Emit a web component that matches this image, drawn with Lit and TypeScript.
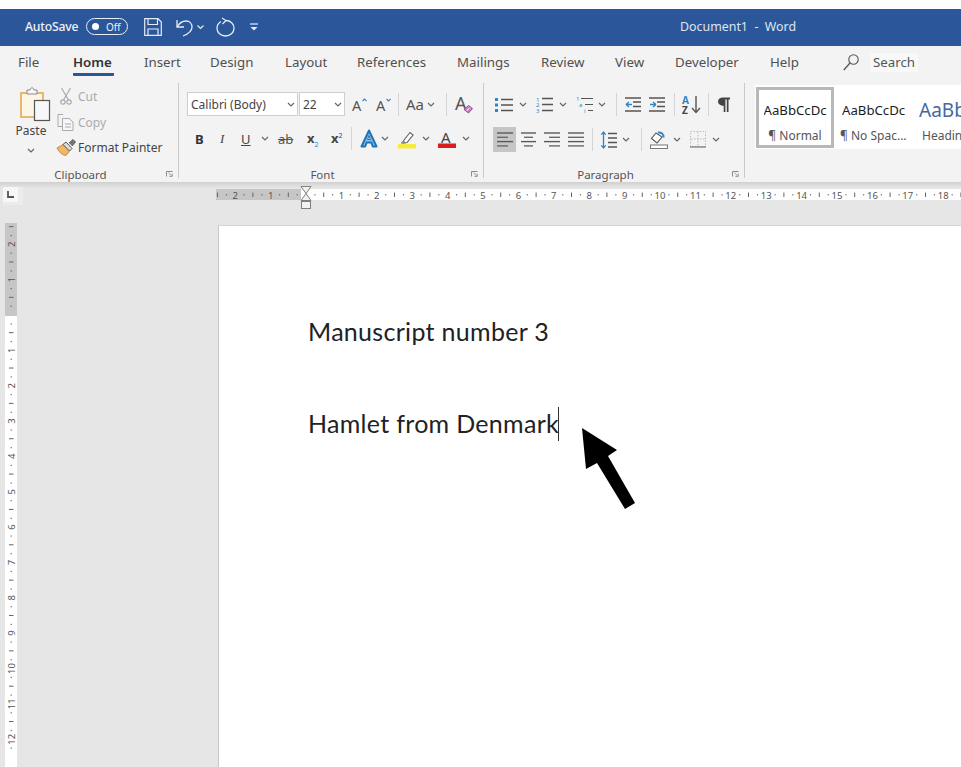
import { LitElement, html, css, svg, TemplateResult } from "lit";
import { customElement } from "lit/decorators.js";

const chev = () => html`<svg class="chev" width="8" height="5" viewBox="0 0 8 5"><path d="M1 1 L4 4 L7 1" fill="none" stroke="#666" stroke-width="1.2"/></svg>`;
const sep = () => html`<span class="vsep"></span>`;
const ic = (w: number, h: number, body: unknown) => html`<svg width=${w} height=${h} viewBox="0 0 ${w} ${h}" fill="none">${body}</svg>`;

const bullets = ic(18, 16, svg`<g fill="#2e86c9"><rect x="0" y="1" width="3" height="3"/><rect x="0" y="6.5" width="3" height="3"/><rect x="0" y="12" width="3" height="3"/></g><path d="M6 2.5H18M6 8H18M6 13.5H18" stroke="#555" stroke-width="1.3"/>`);
const numbering = ic(17, 17, svg`<g font-family="Noto Sans" font-size="6" fill="#2e86c9"><text x="0" y="5.5">1</text><text x="0" y="11">2</text><text x="0" y="16.5">3</text></g><path d="M6 2.5H17M6 8.5H17M6 14.5H17" stroke="#555" stroke-width="1.3"/>`);
const multilevel = ic(17, 17, svg`<g font-family="Noto Sans" font-size="6" fill="#2e86c9"><text x="0" y="5">1</text><text x="3" y="11">a</text><text x="8" y="16.5">i</text></g><path d="M5 2.5H17M9 8.5H17M12 14.5H17" stroke="#555" stroke-width="1.2"/>`);
const outdent = ic(16, 15, svg`<path d="M0 1H16M8 5H16M8 9.5H16M0 14H16" stroke="#555" stroke-width="1.3"/><path d="M1 7.5H7M1 7.5L4 5M1 7.5L4 10" stroke="#2e86c9" stroke-width="1.3"/>`);
const indent = ic(16, 15, svg`<path d="M0 1H16M8 5H16M8 9.5H16M0 14H16" stroke="#555" stroke-width="1.3"/><path d="M1 7.5H7M7 7.5L4 5M7 7.5L4 10" stroke="#2e86c9" stroke-width="1.3"/>`);
const sort = ic(19, 19, svg`<text x="0" y="8.5" font-family="Noto Sans" font-size="10" font-weight="700" fill="#2e86c9">A</text><text x="0" y="18.5" font-family="Noto Sans" font-size="10" font-weight="700" fill="#444">Z</text><path d="M14 1V17M10 13L14 17.5L18 13" stroke="#555" stroke-width="1.4"/>`);
const pilcrow = ic(12, 15, svg`<path d="M5 .5H12V2.5H10.5V15H8.8V2.5H7.4V15H5.7V8.8C2.5 8.8 0 7.2 0 4.6C0 2 2.2 .5 5 .5Z" fill="#444"/>`);
const align = (rows: [number, number][]) => ic(16, 15, svg`${rows.map(([a, b], i) => svg`<path d="M${a} ${1 + i * 4.3}H${b}" stroke=${i % 2 ? "#6a6a6a" : "#5a5a5a"} stroke-width="1.4"/>`)}`);
const spacing = ic(16, 18, svg`<path d="M2.5 1V17M.3 3.6L2.5 1L4.7 3.6M.3 14.4L2.5 17L4.7 14.4" stroke="#2e86c9" stroke-width="1.3"/><path d="M7 2.5H16M7 7H16M7 11.5H16M7 16H16" stroke="#555" stroke-width="1.3"/>`);
const shading = ic(18, 18, svg`<path d="M6 2L1.5 7.5L7 12L12 6Z" fill="#fff" stroke="#555" stroke-width="1.1"/><path d="M8 1.5C11 1 14 3 13.5 6.5" stroke="#2e86c9" stroke-width="2"/><rect x=".5" y="14" width="17" height="3.5" fill="#fff" stroke="#777"/>`);
const borders = ic(16, 17, svg`<rect x=".5" y=".5" width="15" height="15" stroke="#bbb" stroke-dasharray="1.5 1.5"/><path d="M8 1V15M1 8H15" stroke="#bbb" stroke-dasharray="1.5 1.5"/><path d="M0 16H16" stroke="#777" stroke-width="1.2"/>`);
const growA = (up: boolean) => ic(15, 15, svg`<text x="0" y="13.5" font-family="Noto Sans" font-size="14.5" fill="#555">A</text><path d=${up ? "M10.5 4L12.5 2L14.5 4" : "M10.5 2L12.5 4L14.5 2"} stroke="#2e86c9" stroke-width="1.1"/>`);
const clearFmt = ic(18, 19, svg`<text x="0" y="15" font-family="Noto Sans" font-size="18" fill="#555">A</text><path d="M9 14.5L13.5 10.5L17.5 13.5L13.5 18Z" fill="#c87fc8" stroke="#8f4f96"/><path d="M11.5 16L15 12.5" stroke="#fff"/>`);
const textEffect = ic(18, 19, svg`<path d="M9 1.5L1.5 17.5H5.2L6.6 13.5H11.4L12.8 17.5H16.5Z" fill="#86bfea" stroke="#2272b5" stroke-width="2" stroke-linejoin="round"/><path d="M7.6 10.5L9 6.5L10.4 10.5Z" fill="#fff" stroke="#2272b5"/>`);
const highlighter = ic(18, 18, svg`<path d="M6 10L12 2.5L15 5L9 12.5L5.5 13Z" fill="#fff" stroke="#666" stroke-width="1.2"/><path d="M3 12.5L5.5 10.5L8 13L3 13.8Z" fill="#888"/><rect x="0" y="14" width="18" height="4.5" fill="#f5ec3d"/>`);
const fontColor = ic(18, 18, svg`<text x="3" y="12.5" font-family="Noto Sans" font-size="15" fill="#444">A</text><rect x="0" y="13.5" width="18" height="4.5" fill="#dd1c1c"/>`);

const row1: [number, TemplateResult | string][] = [
  [495, bullets], [519, chev()], [536, numbering], [559, chev()], [576, multilevel], [598, chev()],
  [616, sep()], [625, outdent], [649, indent], [674, sep()], [682, sort], [708, sep()], [718, pilcrow],
];
const row2: [number, TemplateResult | string][] = [
  [497, align([[0, 16], [0, 11], [0, 16], [0, 11]])],
  [521, align([[0, 15], [3, 12], [0, 15], [3, 12]])],
  [544, align([[0, 16], [5, 16], [0, 16], [5, 16]])],
  [568, align([[0, 16], [0, 16], [0, 16], [0, 16]])],
  [592, sep()], [601, spacing], [622, chev()], [641, sep()], [650, shading], [673, chev()], [690, borders], [712, chev()],
];
const fontRow1: [number, TemplateResult | string][] = [
  [352, growA(true)], [376, growA(false)], [398, sep()], [406, html`<span class="aa">Aa</span>`], [427, chev()], [446, sep()], [455, clearFmt],
];
const fontRow2: [number, TemplateResult | string][] = [
  [195, html`<b class="fb">B</b>`], [220, html`<i class="fi">I</i>`], [241, html`<u class="fu">U</u>`], [261, chev()],
  [278, html`<s class="fs">ab</s>`], [307, html`<span class="fx">x<sub>2</sub></span>`], [331, html`<span class="fx">x<sup>2</sup></span>`],
  [351, sep()], [360, textEffect], [381, chev()], [398, highlighter], [422, chev()], [438, fontColor], [462, chev()],
];

function slots(items: [number, TemplateResult | string][], end: number) {
  return items.map(([x, c], i) => {
    const next = i + 1 < items.length ? items[i + 1][0] : end;
    return html`<span class="slot" style="width:${next - x}px">${c}</span>`;
  });
}

const tabs: [string, number][] = [
  ["File", 55], ["Home", 71], ["Insert", 66], ["Design", 75], ["Layout", 72], ["References", 100],
  ["Mailings", 84], ["Review", 74], ["View", 60], ["Developer", 95], ["Help", 73],
];

const launcher = () => html`<svg class="launcher" width="7" height="6" viewBox="0 0 7 6" fill="none"><path d="M.5 5.5V.5H6.5" stroke="#8a8a8a"/><path d="M2.5 1.8L5.6 4.8M6.2 2.6V5.4H3.4" stroke="#8a8a8a" stroke-width=".9"/></svg>`;

const ORIGIN_H = 306, STEP = 35.4;
function hRuler() {
  const out: unknown[] = [];
  for (let q = -10; q < 76; q++) {
    const x = ORIGIN_H - 216 + (q * STEP) / 4;
    if (x < 0 || x > 745) continue;
    const m = ((q % 4) + 4) % 4;
    if (m === 0) {
      if (q !== 0) out.push(svg`<text x=${x} y="9.6" text-anchor="middle" font-size="9.5">${Math.abs(q / 4)}</text>`);
    } else if (m === 2) {
      out.push(svg`<rect x=${x - 0.5} y="3.5" width="1" height="4.5" fill="#666"/>`);
    } else {
      out.push(svg`<rect x=${x - 0.5} y="5.2" width="1.2" height="1.2" fill="#666"/>`);
    }
  }
  return svg`<svg class="hr-svg" width="745" height="11" viewBox="0 0 745 11" font-family="Noto Sans" fill="#555">${out}</svg>`;
}
function vRuler() {
  const out: unknown[] = [];
  const o = 92;
  for (let q = -10; q < 50; q++) {
    const y = o + (q * 35.35) / 4;
    if (y < 0 || y > 544) continue;
    const m = ((q % 4) + 4) % 4;
    if (m === 0) {
      if (q !== 0) out.push(svg`<text transform="translate(9.6 ${y}) rotate(-90)" text-anchor="middle" font-size="9.5">${Math.abs(q / 4)}</text>`);
    } else if (m === 2) {
      out.push(svg`<rect x="4" y=${y - 0.5} width="4.5" height="1" fill="#666"/>`);
    } else {
      out.push(svg`<rect x="5.6" y=${y - 0.5} width="1.2" height="1.2" fill="#666"/>`);
    }
  }
  return svg`<svg class="vr-svg" width="12" height="544" viewBox="0 0 12 544" font-family="Noto Sans" fill="#555">${out}</svg>`;
}

@customElement("app-root")
export class AppRoot extends LitElement {
  static styles = css`
    :host { display: block; width: 961px; height: 767px; overflow: hidden; background: #e6e6e6; font-family: "Noto Sans", sans-serif; color: #444; position: relative; }
    svg { display: block; flex: none; overflow: visible; }
    .topgap { height: 9px; background: #fff; }
    .title { height: 37px; background: #2b579a; display: flex; align-items: center; color: #e4ebf5; padding: 0 0 2px 25px; box-sizing: border-box; }
    .as { font-size: 12.2px; font-weight: 500; width: 61px; color: #eef2f8; letter-spacing: -0.2px; }
    .toggle { width: 42px; height: 17px; box-sizing: border-box; border: 1px solid #e8eef6; border-radius: 9px; display: flex; align-items: center; padding-left: 5px; gap: 7px; font-size: 10px; color: #eef2f8; margin-right: 16px; }
    .toggle i { width: 7px; height: 7px; border-radius: 50%; background: #fff; flex: none; }
    .qa { display: flex; align-items: center; }
    .doc-title { margin-left: 422px; font-size: 12.4px; white-space: pre; color: #dde5f1; }

    .tabs { height: 34px; background: #f3f3f3; display: flex; align-items: flex-start; padding-left: 18px; box-sizing: border-box; }
    .tab { font-size: 13.3px; line-height: 16px; padding-top: 8px; flex: none; color: #505050; }
    .tab span { display: inline-block; padding-bottom: 3px; }
    .tab.on span { color: #333; font-weight: 600; border-bottom: 3px solid #2b579a; border-radius: 1px; width: 41px; }
    .searchwrap { display: flex; align-items: center; gap: 14px; margin-top: 7px; }
    .searchtxt { background: #f8f8f8; padding: 0 3px; font-size: 13.3px; line-height: 19px; color: #555; margin-left: -3px; }

    .ribbon { height: 102px; background: #f3f3f3; display: flex; box-sizing: border-box; }
    .group { display: flex; flex-direction: column; flex: none; height: 95px; margin-top: 3px; border-right: 1px solid #c9c9c9; box-sizing: content-box; }
    .g1 { width: 178px; } .g2 { width: 304px; } .g3 { width: 260px; }
    .gbody { flex: 1; }
    .glabel { display: flex; align-items: center; height: 18px; margin-bottom: -5px; padding-right: 5px; font-size: 11.5px; color: #555; }
    .glabel span { flex: 1; text-align: center; }
    .launcher { margin-left: 5px; }

    .clip { display: flex; }
    .paste { width: 52px; margin-left: 5px; display: flex; flex-direction: column; align-items: center; padding-top: 4px; font-size: 12px; color: #444; }
    .paste .picon { margin-left: 8px; }
    .paste .ptxt { margin-top: 1px; line-height: 16px; }
    .paste .chev { margin-top: 9px; }
    .cliplist { display: flex; flex-direction: column; padding-top: 1px; }
    .cl { display: flex; align-items: center; height: 25.5px; font-size: 12px; }
    .cl .cicon { width: 21px; flex: none; display: flex; }
    .cl .cicon.cut { padding-left: 3px; width: 18px; }
    .dis { color: #ababab; }

    .combos { display: flex; align-items: center; height: 24px; margin-top: 9px; padding-left: 8px; }
    .combo { box-sizing: border-box; height: 24px; background: #fff; border: 1px solid #cfcfcf; display: flex; align-items: center; font-size: 12px; color: #444; padding-left: 3px; justify-content: space-between; padding-right: 2px; }
    .c1 { width: 111px; margin-right: 1px; } .c2 { width: 46px; margin-right: 7px; }
    .row2 { display: flex; align-items: center; height: 25px; margin-top: 10px; padding-left: 16px; }
    .slot { display: flex; align-items: center; flex: none; height: 25px; }
    .sw31 { width: 31px; } .sw22 { width: 22px; } .sw19 { width: 19px; } .sw34 { width: 34px; }
    .vsep { width: 1px; height: 23px; background: #d4d4d4; display: block; }
    .aa { font-size: 15px; color: #555; line-height: 1; }
    .fb { font-size: 13px; color: #333; font-weight: 700; }
    .fi { font-size: 13px; color: #444; font-family: "Liberation Serif", serif; }
    .fu { font-size: 13px; color: #444; }
    .fs { font-size: 13px; color: #555; }
    .fx { font-size: 13px; font-weight: 700; color: #444; line-height: 1; }
    .fx sub, .fx sup { font-size: 7px; color: #2e86c9; font-weight: 400; line-height: 0; }
    .fx sup { color: #444; }
    .g3top { display: flex; align-items: center; height: 25px; margin-top: 9px; padding-left: 11px; }
    .g3row2 { display: flex; align-items: center; height: 25px; margin-top: 10px; padding-left: 13px; position: relative; }
    .sel { width: 23px; height: 25px; background: #c6c6c6; position: absolute; left: 9px; top: 0; }
    .g3row2 .slot { position: relative; }

    .gallery { margin: 5px 0 0 10px; height: 64px; width: 206px; background: #fff; display: flex; flex: none; overflow: hidden; box-sizing: border-box; padding-left: 1px; }
    .st { flex: none; display: flex; flex-direction: column; box-sizing: border-box; overflow: hidden; }
    .st .prev { display: flex; align-items: flex-end; font-size: 13.2px; color: #1c1c1c; white-space: nowrap; overflow: hidden; }
    .st .nm { font-size: 12px; color: #555; line-height: 16px; white-space: nowrap; }
    .s1 { width: 78px; height: 61px; border: 3px solid #b8b8b8; margin-top: 2px; padding-top: 3px; align-items: center; }
    .s1 .prev { height: 26px; width: 63px; }
    .s1 .nm { margin-top: 9px; }
    .s2 { width: 85px; padding: 5px 0 0 6px; }
    .s2 .prev { height: 29px; width: 63px; margin-left: 2px; }
    .s2 .nm { margin-top: 9px; }
    .s3 { width: 42px; padding-top: 8px; }
    .s3 .prev { font-size: 19px; color: #44699f; height: 29px; line-height: 1.2; overflow: visible; }
    .s3 .nm { margin: 6px 0 0 3px; }

    .shadow { height: 6px; background: linear-gradient(#d0d0d0, #e6e6e6); }
    .work { display: flex; height: 579px; }
    .side { width: 218px; flex: none; padding-left: 3px; box-sizing: border-box; }
    .corner { width: 20px; height: 18px; background: #ececec; margin-top: -1px; box-sizing: border-box; }
    .corner div { width: 15px; height: 15px; background: #f7f7f7; display: flex; align-items: center; justify-content: center; }
    .vr { margin: 18px 0 0 2px; width: 12px; background: linear-gradient(#c6c6c6 0, #c6c6c6 93px, #fff 93px); height: 544px; }
    .main { flex: 1; min-width: 0; }
    .hr { margin: 1px 0 0 -2px; height: 11px; background: linear-gradient(90deg, #c6c6c6 0, #c6c6c6 85px, #fff 85px); width: 745px; position: relative; }
    .indent { position: absolute; left: 84px; top: -3px; }
    .page { margin-top: 25px; height: 600px; background: #fff; border-left: 1px solid #c8c8c8; border-top: 1px solid #d4d4d4; position: relative; padding: 85px 0 0 89px; box-sizing: border-box; font-family: "Lato", sans-serif; font-size: 25px; letter-spacing: 0.3px; color: #222; }
    .para { line-height: 40px; height: 92px; white-space: nowrap; }
    .caret { display: inline-block; width: 1px; height: 34px; background: #333; vertical-align: -8px; margin-left: -1px; }
    .arrow { position: absolute; left: 362px; top: 201px; }
  `;

  render() {
    return html`
      <div class="topgap"></div>
      <div class="title">
        <span class="as">AutoSave</span>
        <span class="toggle"><i></i>Off</span>
        <div class="qa">
          <span class="slot sw31">${ic(18, 18, svg`<path d="M.7.7H14L17.3 4V17.3H.7Z" stroke="#e4ebf5" stroke-width="1.2"/><path d="M4 1V6.5H13.5V1M4 17V11H14V17" stroke="#e4ebf5" stroke-width="1.2"/>`)}</span>
          <span class="slot sw22">${ic(18, 18, svg`<path d="M2 2V9H9" stroke="#e4ebf5" stroke-width="1.3"/><path d="M2 9C5 4 8 3 11 3C15 3 17 6 17 9C17 13 13 16 8 18" stroke="#e4ebf5" stroke-width="1.3"/>`)}</span>
          <span class="slot sw19"><svg width="7" height="4" viewBox="0 0 7 4"><path d="M.5.5L3.5 3.5L6.5.5" fill="none" stroke="#e4ebf5" stroke-width="1.2"/></svg></span>
          <span class="slot sw34">${ic(19, 20, svg`<path d="M5 4.5C2.5 6 1 8.5 1 11.2C1 15.5 4.8 19 9.5 19C14.2 19 18 15.5 18 11.2C18 6.8 14.5 3.5 10 3.5" stroke="#e4ebf5" stroke-width="1.3"/><path d="M6 1L10 3.5L6.5 7" stroke="#e4ebf5" stroke-width="1.2"/>`)}</span>
          ${ic(8, 8, svg`<path d="M0 1H8" stroke="#e4ebf5" stroke-width="1.2"/><path d="M.5 4L4 7.5L7.5 4Z" fill="#e4ebf5"/>`)}
        </div>
        <span class="doc-title">Document1  -  Word</span>
      </div>

      <div class="tabs">
        ${tabs.map(([t, w]) => html`<div class="tab ${t === "Home" ? "on" : ""}" style="width:${w}px"><span>${t}</span></div>`)}
        <div class="searchwrap">
          ${ic(16, 17, svg`<circle cx="10.5" cy="5.5" r="4.7" stroke="#555" stroke-width="1.1"/><path d="M7 9L.8 16" stroke="#555" stroke-width="1.3"/>`)}
          <span class="searchtxt">Search</span>
        </div>
      </div>

      <div class="ribbon">
        <section class="group g1">
          <div class="gbody clip">
            <div class="paste">
              <span class="picon">${ic(30, 35, svg`<path d="M1 6H23V30H1Z" fill="#fdf5e6" stroke="#e9b66f" stroke-width="2"/><path d="M7 7V3H10C10.5 0 13.5 0 14 3H17V7Z" fill="#f6f6f6" stroke="#8a8a8a"/><rect x="14.5" y="13.5" width="15" height="20" fill="#f7f7f7" stroke="#555" stroke-width="1.2"/>`)}</span>
              <span class="ptxt">Paste</span>
              ${chev()}
            </div>
            <div class="cliplist">
              <div class="cl dis"><span class="cicon cut">${ic(12, 17, svg`<path d="M1.5 0L8.5 12M10.5 0L3.5 12" stroke="#aaa" stroke-width="1.2"/><circle cx="3" cy="14" r="2.2" stroke="#aaa" stroke-width="1.2"/><circle cx="9" cy="14" r="2.2" stroke="#aaa" stroke-width="1.2"/>`)}</span><span>Cut</span></div>
              <div class="cl dis"><span class="cicon">${ic(17, 17, svg`<path d="M6 .5H1V12.5H5" stroke="#aaa"/><path d="M5.5 4.5H12L16 8V16.5H5.5Z" stroke="#aaa" fill="#f7f7f7"/><path d="M8 10H14M8 13H14" stroke="#aaa"/>`)}</span>Copy</div>
              <div class="cl"><span class="cicon">${ic(19, 17, svg`<path d="M0 9L6 5.5L12.5 12L9 16.5C5 16 2 13 0 9Z" fill="#f1b768" stroke="#b77a2d" stroke-width=".8"/><path d="M6 5.5L9 3L15 9.5L12.5 12Z" fill="#ddd" stroke="#555"/><path d="M12 4L16 .5L18.5 3L15 7" fill="#777" stroke="#444" stroke-width=".8"/>`)}</span>Format Painter</div>
            </div>
          </div>
          <div class="glabel"><span>Clipboard</span>${launcher()}</div>
        </section>

        <section class="group g2">
          <div class="gbody">
            <div class="combos">
              <div class="combo c1"><span>Calibri (Body)</span>${chev()}</div>
              <div class="combo c2"><span>22</span>${chev()}</div>
              ${slots(fontRow1, 474)}
            </div>
            <div class="row2">${slots(fontRow2, 474)}</div>
          </div>
          <div class="glabel"><span>Font</span>${launcher()}</div>
        </section>

        <section class="group g3">
          <div class="gbody">
            <div class="g3top">${slots(row1, 732)}</div>
            <div class="g3row2"><span class="sel"></span>${slots(row2, 725)}</div>
          </div>
          <div class="glabel"><span>Paragraph</span>${launcher()}</div>
        </section>

        <div class="gallery">
          <div class="st s1"><div class="prev">AaBbCcDc</div><div class="nm">¶ Normal</div></div>
          <div class="st s2"><div class="prev">AaBbCcDc</div><div class="nm">¶ No Spac...</div></div>
          <div class="st s3"><div class="prev">AaBb</div><div class="nm">Heading 1</div></div>
        </div>
      </div>

      <div class="shadow"></div>
      <div class="work">
        <div class="side">
          <div class="corner"><div>${ic(7, 7, svg`<path d="M1 0V6H7" stroke="#555" stroke-width="1.8"/>`)}</div></div>
          <div class="vr">${vRuler()}</div>
        </div>
        <div class="main">
          <div class="hr">${hRuler()}
            <svg class="indent" width="12" height="24" viewBox="0 0 12 24" fill="none"><path d="M1 .5H11L6 7.5L11 14.5H1L6 7.5Z" fill="#f2f2f2" stroke="#808080"/><rect x="1.5" y="15.5" width="9" height="7" fill="#f2f2f2" stroke="#808080"/></svg>
          </div>
          <div class="page">
            <div class="para">Manuscript number 3</div>
            <div class="para">Hamlet from Denmark<span class="caret"></span></div>
            <svg class="arrow" width="56" height="84" viewBox="0 0 56 84"><path d="M1 1L36 23L27 29L54 76L44 82L16 36L5 42Z" fill="#000"/></svg>
          </div>
        </div>
      </div>
    `;
  }
}
